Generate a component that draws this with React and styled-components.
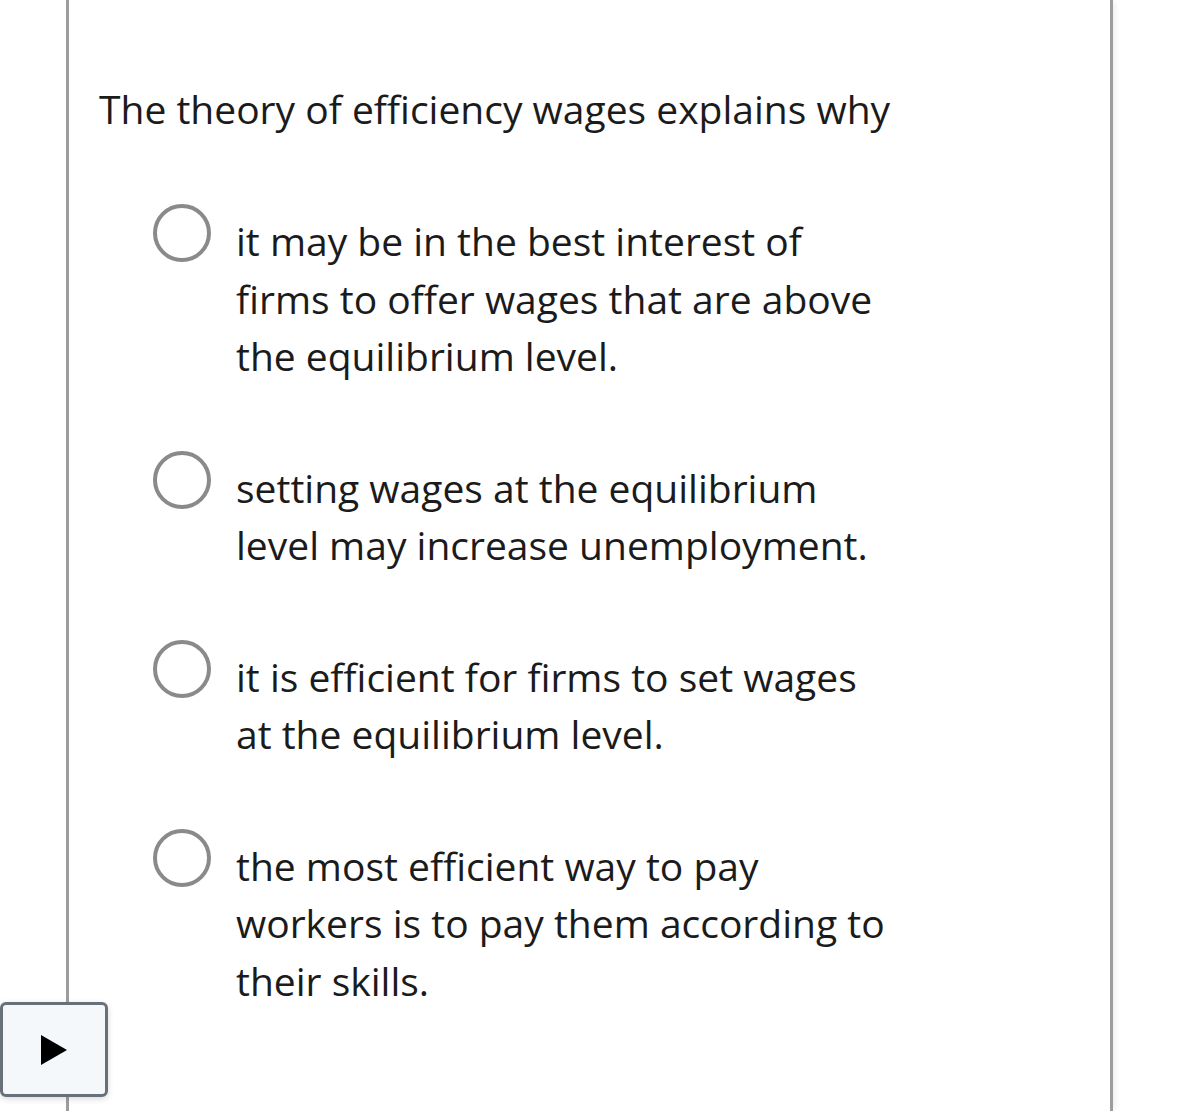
import React from 'react';
import styled, { createGlobalStyle } from 'styled-components';

const GlobalStyle = createGlobalStyle`
    html, body {
        margin: 0;
        padding: 0;
        background: #ffffff;
    }
    body {
        font-family: "Open Sans", "Noto Sans", sans-serif;
        color: #1b1b1b;
    }
`

const Page = styled.div`
    position: relative;
    width: 1179px;
    height: 1111px;
    overflow: hidden;
`

const Card = styled.main`
    box-sizing: border-box;
    margin-left: 66px;
    width: 1047px;
    min-height: 1111px;
    border-left: 3px solid #9d9d9d;
    border-right: 3px solid #9d9d9d;
    box-shadow: 4px 0 6px -2px rgba(0, 0, 0, 0.08);
    padding: 80px 0 0 30px;
`

const Question = styled.h1`
    margin: 0 0 74px 0;
    font-size: 39px;
    font-weight: 400;
    line-height: 58px;
`

const Options = styled.ul`
    list-style: none;
    margin: 0;
    padding: 0 0 0 54px;
    display: flex;
    flex-direction: column;
    gap: 74px;
`

const Option = styled.li`
    display: flex;
    flex-direction: row;
    align-items: flex-start;
    gap: 25px;
    cursor: pointer;
`

const Radio = styled.span`
    flex: none;
    box-sizing: border-box;
    width: 58px;
    height: 58px;
    margin-top: -8px;
    border: 4px solid #8a8a8d;
    border-radius: 50%;
    background: #ffffff;
`

const Label = styled.span`
    max-width: 658px;
    font-size: 39px;
    line-height: 57.5px;
`

const PlayButton = styled.button`
    position: absolute;
    left: 0;
    top: 1002px;
    box-sizing: border-box;
    width: 108px;
    height: 95px;
    display: flex;
    align-items: center;
    justify-content: center;
    background: #f5f8fb;
    border: 3px solid #68717a;
    border-radius: 6px;
    box-shadow: 0 2px 6px rgba(0, 0, 0, 0.15);
    padding: 0;
`

const answers = [
    "it may be in the best interest of firms to offer wages that are above the equilibrium level.",
    "setting wages at the equilibrium level may increase unemployment.",
    "it is efficient for firms to set wages at the equilibrium level.",
    "the most efficient way to pay workers is to pay them according to their skills."
];

export default function App() {
    return (
        <Page>
            <GlobalStyle />
            <Card>
                <Question>The theory of efficiency wages explains why</Question>
                <Options>
                    {answers.map(a => (
                        <Option key={a}>
                            <Radio />
                            <Label>{a}</Label>
                        </Option>
                    ))}
                </Options>
            </Card>
            <PlayButton aria-label="play">
                <svg width="28" height="30" viewBox="0 0 28 30">
                    <polygon points="1,0 27,15 1,30" fill="#000" />
                </svg>
            </PlayButton>
        </Page>
    );
}
